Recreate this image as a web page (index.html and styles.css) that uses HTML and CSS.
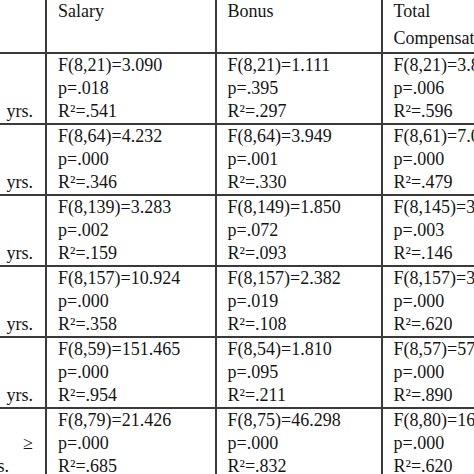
FILE: index.html
```html
<!DOCTYPE html>
<html>
<head>
<meta charset="utf-8">
<link rel="stylesheet" href="styles.css">
</head>
<body>
<table class="t">
<colgroup><col class="c1"><col class="c2"><col class="c3"><col class="c4"></colgroup>
<thead>
<tr><th></th><th>Salary</th><th>Bonus</th><th>Total<br>Compensation</th></tr>
</thead>
<tbody>
<tr><td class="lab"><br><br>yrs.</td><td>F(8,21)=3.090<br>p=.018<br>R²=.541</td><td>F(8,21)=1.111<br>p=.395<br>R²=.297</td><td>F(8,21)=3.857<br>p=.006<br>R²=.596</td></tr>
<tr><td class="lab"><br><br>yrs.</td><td>F(8,64)=4.232<br>p=.000<br>R²=.346</td><td>F(8,64)=3.949<br>p=.001<br>R²=.330</td><td>F(8,61)=7.025<br>p=.000<br>R²=.479</td></tr>
<tr><td class="lab"><br><br>yrs.</td><td>F(8,139)=3.283<br>p=.002<br>R²=.159</td><td>F(8,149)=1.850<br>p=.072<br>R²=.093</td><td>F(8,145)=3.107<br>p=.003<br>R²=.146</td></tr>
<tr><td class="lab"><br><br>yrs.</td><td>F(8,157)=10.924<br>p=.000<br>R²=.358</td><td>F(8,157)=2.382<br>p=.019<br>R²=.108</td><td>F(8,157)=32.036<br>p=.000<br>R²=.620</td></tr>
<tr><td class="lab"><br><br>yrs.</td><td>F(8,59)=151.465<br>p=.000<br>R²=.954</td><td>F(8,54)=1.810<br>p=.095<br>R²=.211</td><td>F(8,57)=57.862<br>p=.000<br>R²=.890</td></tr>
<tr><td class="lab"><br>≥<br><span class="last">yrs.</span></td><td>F(8,79)=21.426<br>p=.000<br>R²=.685</td><td>F(8,75)=46.298<br>p=.000<br>R²=.832</td><td>F(8,80)=16.324<br>p=.000<br>R²=.620</td></tr>
</tbody>
</table>
</body>
</html>
```
FILE: styles.css
```css
html, body {
  margin: 0;
  padding: 0;
  background: #fff;
  overflow: hidden;
  width: 474px;
  height: 474px;
}
.t {
  border-collapse: collapse;
  table-layout: fixed;
  width: 655.5px;
  margin-left: -75px;
  margin-top: -21px;
  font-family: "Liberation Serif", "Times New Roman", serif;
  font-size: 18px;
  color: #151515;
}
.c1 { width: 120px; }
.c2 { width: 169.5px; }
.c3 { width: 166px; }
.c4 { width: 200px; }
.t th, .t td {
  border: 2px solid #3a3a3a;
  padding: 0 0 0 11px;
  vertical-align: top;
  text-align: left;
  font-weight: normal;
  line-height: 23px;
  white-space: nowrap;
  overflow: hidden;
}
.t th {
  height: 50px;
  padding-top: 17px;
  line-height: 27px;
  box-sizing: border-box;
}
.t td {
  height: 69px;
}
.t td.lab {
  text-align: right;
  padding: 0 12px 0 0;
}
.last {
  margin-right: 24px;
}
```
